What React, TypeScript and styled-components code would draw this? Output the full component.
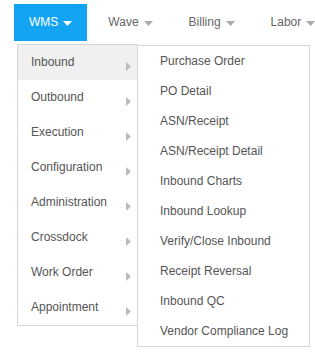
import styled, { createGlobalStyle } from 'styled-components';

const GlobalStyle = createGlobalStyle`
  html, body {
    margin: 0;
    padding: 0;
    background: #fff;
    font-family: "Liberation Sans", Arial, sans-serif;
  }
`;

/* ================================================================
   Data
   ================================================================ */

const NAV = [
  { label: 'WMS', active: true },
  { label: 'Wave', active: false },
  { label: 'Billing', active: false },
  { label: 'Labor', active: false },
];

const GROUPS = [
  'Inbound',
  'Outbound',
  'Execution',
  'Configuration',
  'Administration',
  'Crossdock',
  'Work Order',
  'Appointment',
];

const INBOUND_ITEMS = [
  'Purchase Order',
  'PO Detail',
  'ASN/Receipt',
  'ASN/Receipt Detail',
  'Inbound Charts',
  'Inbound Lookup',
  'Verify/Close Inbound',
  'Receipt Reversal',
  'Inbound QC',
  'Vendor Compliance Log',
];

/* ================================================================
   Styles
   ================================================================ */

const Page = styled.div`
  padding: 4px 0 0 14px;
`;

const NavBar = styled.nav`
  display: flex;
  align-items: flex-start;
  gap: 6px;
`;

const NavItem = styled.div<{ $active: boolean }>`
  display: flex;
  align-items: center;
  gap: 5px;
  height: 37px;
  padding: 0 15px;
  font-size: 12px;
  line-height: 37px;
  color: ${({ $active }) => ($active ? '#fff' : '#666')};
  background: ${({ $active }) => ($active ? '#12a4f2' : 'transparent')};
`;

const Caret = styled.svg`
  display: block;
  margin-top: 1px;
`;

const Dropdown = styled.div`
  display: flex;
  align-items: flex-start;
  margin: 3px 0 0 3px;
`;

const Menu = styled.ul`
  width: 121px;
  box-sizing: border-box;
  margin: 0;
  padding: 0;
  list-style: none;
  background: #fff;
  border: 1px solid #d6d6d6;
`;

const MenuRow = styled.li<{ $hover: boolean }>`
  display: flex;
  align-items: center;
  justify-content: space-between;
  height: 35px;
  padding: 0 6px 0 13px;
  font-size: 12px;
  line-height: 35px;
  color: #555;
  white-space: nowrap;
  background: ${({ $hover }) => ($hover ? '#f0f0f0' : 'transparent')};
`;

const Arrow = styled.svg`
  display: block;
  margin-top: 7px;
`;

const SubMenu = styled.ul`
  width: 173px;
  box-sizing: border-box;
  margin: 1px 0 0 -1px;
  padding: 0;
  list-style: none;
  background: #fff;
  border: 1px solid #d6d6d6;
`;

const SubRow = styled.li`
  height: 30px;
  padding-left: 22px;
  font-size: 12px;
  line-height: 30px;
  color: #555;
  white-space: nowrap;
`;

/* ================================================================
   Component
   ================================================================ */

export default function App() {
  return (
    <Page>
      <GlobalStyle />
      <NavBar>
        {NAV.map((n) => (
          <NavItem key={n.label} $active={n.active}>
            {n.label}
            <Caret width="9" height="5" viewBox="0 0 9 5">
              <polygon points="0,0 9,0 4.5,5" fill={n.active ? '#fff' : '#aaa'} />
            </Caret>
          </NavItem>
        ))}
      </NavBar>
      <Dropdown>
        <Menu>
          {GROUPS.map((g, i) => (
            <MenuRow key={g} $hover={i === 0}>
              {g}
              <Arrow width="5" height="9" viewBox="0 0 5 9">
                <polygon points="0,0 5,4.5 0,9" fill="#bbb" />
              </Arrow>
            </MenuRow>
          ))}
        </Menu>
        <SubMenu>
          {INBOUND_ITEMS.map((s) => (
            <SubRow key={s}>{s}</SubRow>
          ))}
        </SubMenu>
      </Dropdown>
    </Page>
  );
}
